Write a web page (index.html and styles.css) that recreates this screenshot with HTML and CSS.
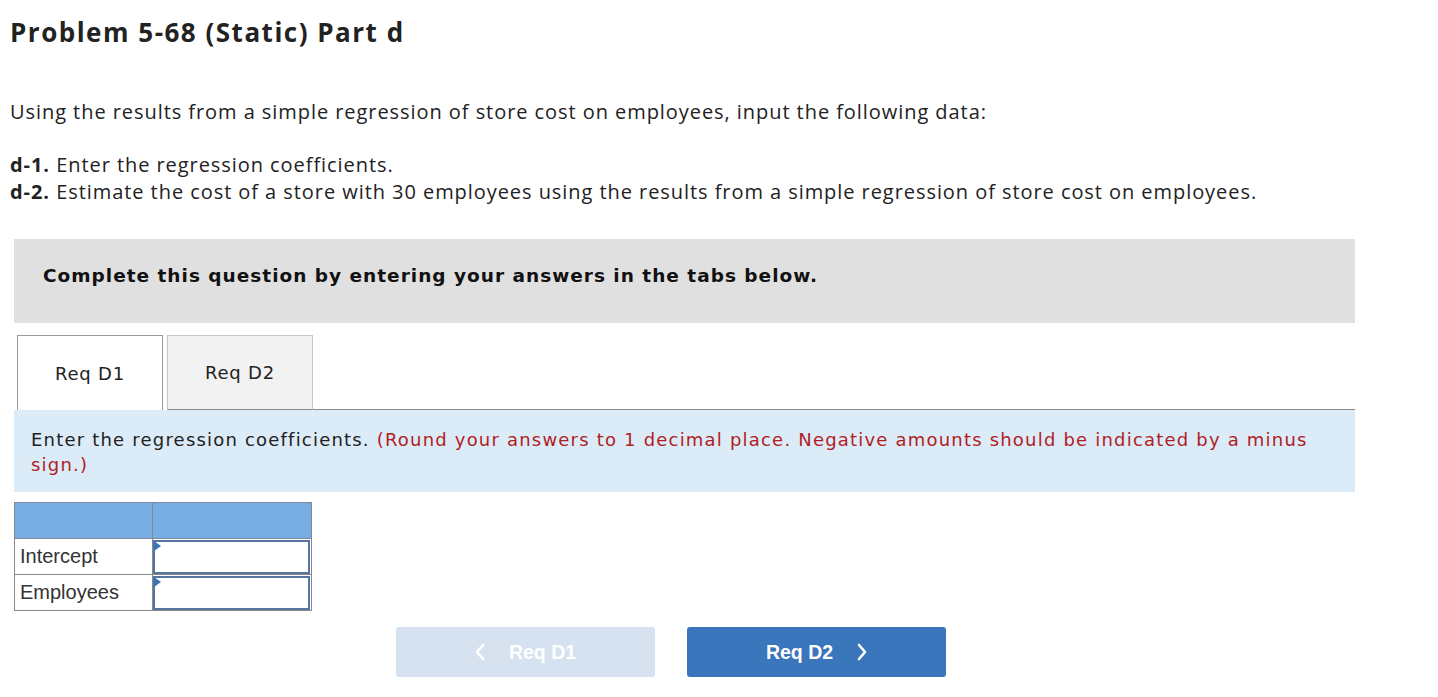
FILE: index.html
```html
<!DOCTYPE html>
<html>
<head>
<meta charset="utf-8">
<link rel="stylesheet" href="styles.css">
</head>
<body>
<div class="page">
  <h1 class="title">Problem 5-68 (Static) Part d</h1>
  <p class="intro">Using the results from a simple regression of store cost on employees, input the following data:</p>
  <p class="parts"><b>d-1.</b> Enter the regression coefficients.<br><b>d-2.</b> Estimate the cost of a store with 30 employees using the results from a simple regression of store cost on employees.</p>

  <div class="widget">
    <div class="banner">Complete this question by entering your answers in the tabs below.</div>
    <div class="tabs">
      <div class="tab active">Req D1</div>
      <div class="tab">Req D2</div>
      <div class="tab-fill"></div>
    </div>
    <div class="instr"><span>Enter the regression coefficients.</span> <span class="red">(Round your answers to 1 decimal place. Negative amounts should be indicated by a minus</span> <span class="red">sign.)</span></div>
    <table class="grid">
      <tr class="head"><td class="c1"></td><td class="c2"></td></tr>
      <tr><td class="c1">Intercept</td><td class="c2 inp"><div class="box"><span class="mark"></span></div></td></tr>
      <tr><td class="c1">Employees</td><td class="c2 inp"><div class="box"><span class="mark"></span></div></td></tr>
    </table>
    <div class="nav">
      <div class="btn prev"><svg class="chev" width="10" height="18" viewBox="0 0 10 18"><path d="M8 2 L2 9 L8 16" fill="none" stroke="#fff" stroke-width="2.6" stroke-linecap="round" stroke-linejoin="round"/></svg><span>Req D1</span></div>
      <div class="btn next"><span>Req D2</span><svg class="chev" width="10" height="18" viewBox="0 0 10 18"><path d="M2 2 L8 9 L2 16" fill="none" stroke="#fff" stroke-width="2.6" stroke-linecap="round" stroke-linejoin="round"/></svg></div>
    </div>
  </div>
</div>
</body>
</html>
```
FILE: styles.css
```css
html, body { margin: 0; padding: 0; background: #fff; }
.page { padding: 0 10px; color: #222; font-family: "Open Sans", Lato, sans-serif; }
.title { margin: 0; padding-top: 15px; font-size: 26px; font-weight: 700; line-height: 34px; color: #222; letter-spacing: 1.5px; }
.intro { margin: 0; padding-top: 48px; font-size: 20px; line-height: 30px; letter-spacing: 0.94px; }
.parts { margin: 0; padding-top: 24px; font-size: 20px; line-height: 27px; letter-spacing: 0.94px; }
.parts b { font-weight: 700; }
.widget { width: 1341px; margin-left: 4px; margin-top: 34px; }
.banner { background: #e0e0e0; height: 84px; box-sizing: border-box; padding: 26px 0 0 29px; font-family: "DejaVu Sans", Verdana, sans-serif; font-weight: 700; font-size: 18.5px; letter-spacing: 1px; color: #111; }
.tabs { display: flex; margin-top: 12px; padding-left: 3px; height: 75px; }
.tab { width: 146px; box-sizing: border-box; border: 1px solid #c8c8c8; border-bottom: 1px solid #8a8a8a; background: #f2f2f2; display: flex; align-items: center; justify-content: center; font-family: "DejaVu Sans", Verdana, sans-serif; font-size: 18px; letter-spacing: 0.8px; color: #222; margin-right: 4px; }
.tab.active { background: #fff; border: 1px solid #9a9a9a; border-bottom: none; }
.tab-fill { flex: 1; border-bottom: 1px solid #8a8a8a; margin-left: -4px; }
.instr { background: #dcebf8; padding: 17px 17px 15px 17px; font-family: "DejaVu Sans", Verdana, sans-serif; font-size: 18px; line-height: 25px; color: #222; letter-spacing: 1.2px; }
.red { color: #b01d23; }
.grid { margin-top: 10px; border-collapse: collapse; font-family: "Liberation Sans", Arial, sans-serif; font-size: 20px; color: #333; }
.grid td { border: 1px solid #888; padding: 0; height: 35px; }
.grid .c1 { width: 138px; padding-left: 5px; box-sizing: border-box; }
.grid .c2 { width: 158px; }
.grid .head td { background: #78ade4; border-color: #7c8a99; }
.grid .inp { position: relative; padding: 0; }
.box { position: relative; height: 34px; border: 2px solid #55749f; box-sizing: border-box; background: #fff; margin: 0 1px 0 0; }
.mark { position: absolute; left: -1px; top: -1px; width: 0; height: 0; border-top: 5px solid transparent; border-bottom: 5px solid transparent; border-left: 7px solid #3a74b8; }
.nav { display: flex; gap: 32px; margin-top: 16px; margin-left: 382px; }
.btn { width: 259px; height: 50px; border-radius: 3px; display: flex; align-items: center; justify-content: center; gap: 24px; font-family: "Liberation Sans", Arial, sans-serif; font-weight: 700; font-size: 19.5px; color: #fff; }
.btn.prev { background: #d6e2f0; }
.btn.next { background: #3a76bb; }
.chev { display: block; }
```
